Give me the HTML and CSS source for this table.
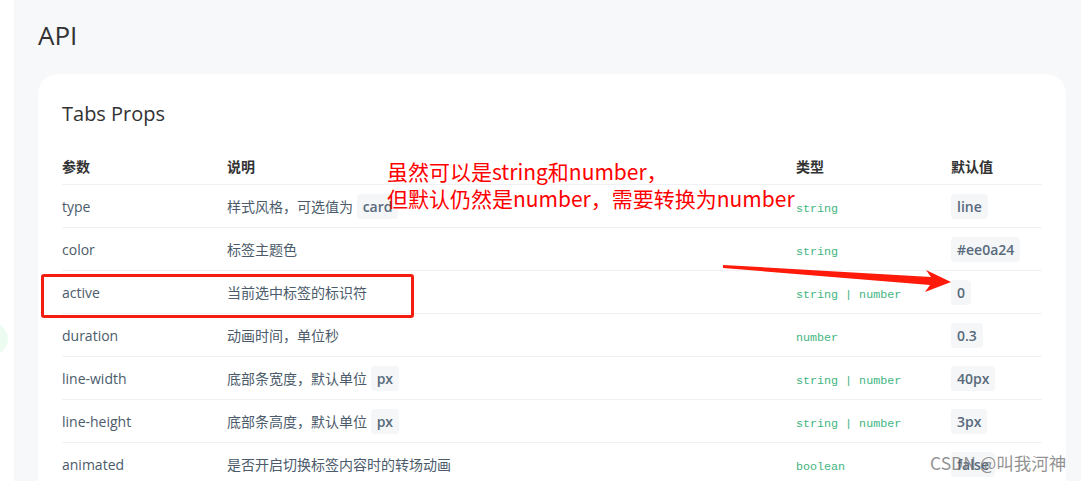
FILE: index.html
```html
<!DOCTYPE html>
<html lang="zh">
<head>
    <meta charset="UTF-8">
    <meta name="viewport" content="width=device-width, initial-scale=1.0">
    <title>Tabs API</title>
    <link rel="stylesheet" href="styles.css">
</head>
<body>
    <div class="side">
        <span class="dot"></span>
    </div>
    <div class="main">
        <h2>API</h2>
        <div class="card">
            <h3>Tabs Props</h3>
            <table class="props">
                <thead>
                    <tr>
                        <th class="c1">参数</th>
                        <th class="c2">说明</th>
                        <th class="c3">类型</th>
                        <th class="c4">默认值</th>
                    </tr>
                </thead>
                <tbody>
                    <tr>
                        <td>type</td>
                        <td>样式风格，可选值为 <code>card</code></td>
                        <td><em>string</em></td>
                        <td><code>line</code></td>
                    </tr>
                    <tr>
                        <td>color</td>
                        <td>标签主题色</td>
                        <td><em>string</em></td>
                        <td><code>#ee0a24</code></td>
                    </tr>
                    <tr>
                        <td>active</td>
                        <td>当前选中标签的标识符</td>
                        <td><em>string | number</em></td>
                        <td><code>0</code></td>
                    </tr>
                    <tr>
                        <td>duration</td>
                        <td>动画时间，单位秒</td>
                        <td><em>number</em></td>
                        <td><code>0.3</code></td>
                    </tr>
                    <tr>
                        <td>line-width</td>
                        <td>底部条宽度，默认单位 <code>px</code></td>
                        <td><em>string | number</em></td>
                        <td><code>40px</code></td>
                    </tr>
                    <tr>
                        <td>line-height</td>
                        <td>底部条高度，默认单位 <code>px</code></td>
                        <td><em>string | number</em></td>
                        <td><code>3px</code></td>
                    </tr>
                    <tr>
                        <td>animated</td>
                        <td>是否开启切换标签内容时的转场动画</td>
                        <td><em>boolean</em></td>
                        <td><code>false</code></td>
                    </tr>
                </tbody>
            </table>
        </div>
    </div>

    <!-- annotations drawn on top of the screenshot -->
    <div class="note">虽然可以是string和number，<br>但默认仍然是number，需要转换为number</div>
    <div class="mark"></div>
    <svg class="arrow" width="240" height="40" viewBox="0 0 240 40">
        <polygon points="0,1 208,13 203,6 228,18 202,28 207,21 0,4" fill="#ff1a0a"/>
    </svg>
    <div class="watermark">CSDN @叫我河神</div>
</body>
</html>
```

FILE: styles.css
```css
body {
    margin: 0;
    display: flex;
    height: 481px;
    overflow: hidden;
    font-family: "Open Sans", "Noto Sans CJK SC", sans-serif;
    background: #fff;
    position: relative;
}
.side {
    width: 14px;
    flex-shrink: 0;
    position: relative;
    overflow: hidden;
}
.dot {
    position: absolute;
    left: -24px;
    top: 323px;
    width: 32px;
    height: 32px;
    border-radius: 50%;
    background: #edfcf1;
}
.main {
    flex: 1;
    background: #f7f8fa;
    padding: 17px 15px 0 24px;
}
h2 {
    margin: 0 0 21px;
    font-size: 26px;
    font-weight: 400;
    line-height: 36px;
    color: #323233;
}
.card {
    background: #fff;
    border-radius: 20px;
    padding: 26px 24px 40px;
}
h3 {
    margin: 0 0 20px;
    font-size: 20px;
    font-weight: 500;
    line-height: 28px;
    color: #323233;
}
.props {
    width: 100%;
    border-collapse: collapse;
    font-size: 14px;
    color: #4b5b6b;
}
.props th {
    text-align: left;
    font-size: 14px;
    font-weight: 600;
    color: #323233;
    height: 35px;
    padding: 0 0 1px;
    border-bottom: 1px solid #f0f1f5;
}
.props td {
    height: 42px;
    padding: 0;
    border-bottom: 1px solid #f0f1f5;
}
.c1 { width: 165px; }
.c2 { width: 569px; }
.c3 { width: 155px; }
.props em {
    font-style: normal;
    font-family: "Liberation Mono", monospace;
    font-size: 11.7px;
    color: #3fb57f;
}
.props code {
    font-family: "Open Sans", sans-serif;
    font-size: 14px;
    font-weight: 600;
    color: #586a7c;
    background: #f5f6f8;
    border-radius: 4px;
    padding: 3px 6px;
}
.note {
    position: absolute;
    left: 387px;
    top: 158px;
    font-family: "Noto Sans CJK SC", sans-serif;
    font-size: 21px;
    line-height: 27px;
    color: #ff0000;
    white-space: nowrap;
}
.mark {
    position: absolute;
    left: 41px;
    top: 274px;
    width: 367px;
    height: 38px;
    border: 3px solid #f51c10;
    border-radius: 3px;
}
.arrow {
    position: absolute;
    left: 723px;
    top: 264px;
}
.watermark {
    position: absolute;
    left: 930px;
    top: 451px;
    font-family: "Noto Sans CJK SC", sans-serif;
    font-size: 17.5px;
    line-height: 24px;
    color: rgba(110, 110, 110, 0.75);
}
```
